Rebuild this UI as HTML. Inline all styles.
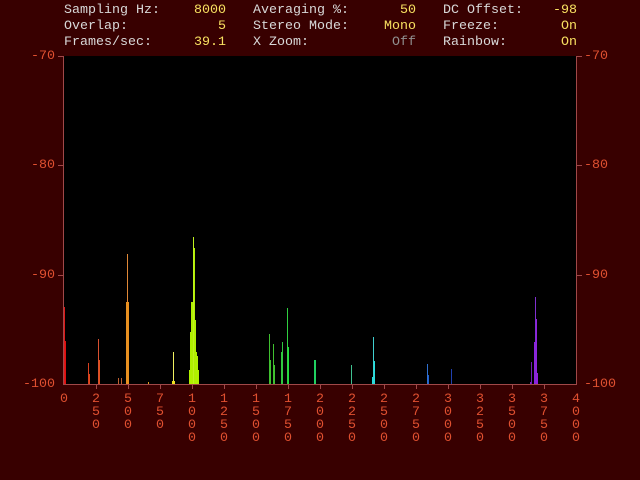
<!DOCTYPE html><html><head><style>
body{margin:0;width:640px;height:480px;background:#380000;overflow:hidden;position:relative;font-family:"Liberation Mono",monospace;font-size:13.33px}
.t{position:absolute;white-space:pre;line-height:16px}
.g{color:#d8d8d8}.y{color:#f8e060}.o{color:#909090}
.a{position:absolute;color:#e05030;line-height:13px;white-space:pre}
</style></head><body>
<div class="t g" style="left:64px;top:3px">Sampling Hz:<br>Overlap:<br>Frames/sec:</div>
<div class="t y" style="left:160px;top:3px;width:66px;text-align:right">8000<br>5<br>39.1</div>
<div class="t g" style="left:253px;top:3px">Averaging %:<br>Stereo Mode:<br>X Zoom:</div>
<div class="t y" style="left:350px;top:3px;width:66px;text-align:right">50<br>Mono<br><span class="o">Off</span></div>
<div class="t g" style="left:443px;top:3px">DC Offset:<br>Freeze:<br>Rainbow:</div>
<div class="t y" style="left:510px;top:3px;width:67px;text-align:right">-98<br>On<br>On</div>
<svg width="640" height="480" style="position:absolute;left:0;top:0">
<rect x="64" y="56" width="512" height="328" fill="#000"/>
<g stroke="#a04848" stroke-width="1" fill="none">
<path d="M63.5 56V384.5H576.5V56"/>
<path d="M58 56.5H64M58 165.5H64M58 275.5H64M576 56.5H582M576 165.5H582M576 275.5H582"/>
<path d="M96.5 385V389M128.5 385V389M160.5 385V389M192.5 385V389M224.5 385V389M256.5 385V389M288.5 385V389M320.5 385V389M352.5 385V389M384.5 385V389M416.5 385V389M448.5 385V389M480.5 385V389M512.5 385V389M544.5 385V389"/>
</g>
<g>
<rect x="64" y="307" width="1" height="77" fill="#e01818"/><rect x="65" y="341" width="1" height="43" fill="#e01010"/>
<rect x="88" y="363" width="1" height="21" fill="#d84020"/><rect x="89" y="374" width="1" height="10" fill="#e04818"/>
<rect x="98" y="339" width="1" height="45" fill="#d85030"/><rect x="99" y="360" width="1" height="24" fill="#e05018"/>
<rect x="118" y="378" width="1" height="6" fill="#c06030"/><rect x="121" y="378" width="1" height="6" fill="#c06030"/>
<rect x="126" y="302" width="3" height="82" fill="#e89020"/><rect x="127" y="254" width="1" height="48" fill="#e08838"/>
<rect x="148" y="382" width="1" height="2" fill="#e0a020"/>
<rect x="173" y="352" width="1" height="32" fill="#f0f060"/><rect x="172" y="381" width="3" height="3" fill="#f0e020"/>
<rect x="189" y="370" width="10" height="14" fill="#b0f000"/>
<rect x="190" y="332" width="2" height="52" fill="#b0f000"/><rect x="191" y="302" width="1" height="82" fill="#b0f000"/>
<rect x="192" y="302" width="1" height="82" fill="#b0f000"/><rect x="193" y="237" width="1" height="147" fill="#c0f020"/>
<rect x="194" y="248" width="1" height="136" fill="#b0f000"/><rect x="195" y="320" width="1" height="64" fill="#b0f000"/>
<rect x="196" y="352" width="1" height="32" fill="#b0f000"/><rect x="197" y="356" width="1" height="28" fill="#b0f000"/>
<rect x="269" y="334" width="1" height="50" fill="#40c030"/><rect x="270" y="360" width="1" height="24" fill="#40c030"/>
<rect x="273" y="344" width="1" height="40" fill="#40c030"/><rect x="274" y="365" width="1" height="19" fill="#40c030"/>
<rect x="281" y="352" width="1" height="32" fill="#30c840"/><rect x="282" y="342" width="1" height="42" fill="#30c840"/>
<rect x="287" y="308" width="1" height="76" fill="#30d040"/><rect x="288" y="347" width="1" height="37" fill="#20e040"/>
<rect x="314" y="360" width="2" height="24" fill="#20d060"/>
<rect x="351" y="365" width="1" height="19" fill="#40c090"/>
<rect x="373" y="337" width="1" height="47" fill="#40d0d0"/><rect x="374" y="361" width="1" height="23" fill="#20e0e0"/><rect x="372" y="377" width="1" height="7" fill="#20e0e0"/>
<rect x="427" y="364" width="1" height="20" fill="#3070d0"/><rect x="428" y="375" width="1" height="9" fill="#2060d0"/>
<rect x="451" y="369" width="1" height="15" fill="#2040b0"/>
<rect x="531" y="362" width="1" height="22" fill="#7020b0"/><rect x="530" y="382" width="1" height="2" fill="#8020d0"/>
<rect x="534" y="342" width="1" height="42" fill="#9020e0"/><rect x="535" y="297" width="1" height="87" fill="#8030d0"/>
<rect x="536" y="319" width="1" height="65" fill="#9020e0"/><rect x="537" y="373" width="1" height="11" fill="#9020e0"/>
</g>
</svg>
<div class="a" style="left:22px;top:50px;width:33px;text-align:right">-70</div>
<div class="a" style="left:22px;top:159px;width:33px;text-align:right">-80</div>
<div class="a" style="left:22px;top:269px;width:33px;text-align:right">-90</div>
<div class="a" style="left:22px;top:378px;width:33px;text-align:right">-100</div>
<div class="a" style="left:584px;top:50px">-70</div>
<div class="a" style="left:584px;top:159px">-80</div>
<div class="a" style="left:584px;top:269px">-90</div>
<div class="a" style="left:584px;top:378px">-100</div>
<div class="a" style="left:60px;top:393px">0</div>
<div class="a" style="left:92px;top:393px">2<br>5<br>0</div>
<div class="a" style="left:124px;top:393px">5<br>0<br>0</div>
<div class="a" style="left:156px;top:393px">7<br>5<br>0</div>
<div class="a" style="left:188px;top:393px">1<br>0<br>0<br>0</div>
<div class="a" style="left:220px;top:393px">1<br>2<br>5<br>0</div>
<div class="a" style="left:252px;top:393px">1<br>5<br>0<br>0</div>
<div class="a" style="left:284px;top:393px">1<br>7<br>5<br>0</div>
<div class="a" style="left:316px;top:393px">2<br>0<br>0<br>0</div>
<div class="a" style="left:348px;top:393px">2<br>2<br>5<br>0</div>
<div class="a" style="left:380px;top:393px">2<br>5<br>0<br>0</div>
<div class="a" style="left:412px;top:393px">2<br>7<br>5<br>0</div>
<div class="a" style="left:444px;top:393px">3<br>0<br>0<br>0</div>
<div class="a" style="left:476px;top:393px">3<br>2<br>5<br>0</div>
<div class="a" style="left:508px;top:393px">3<br>5<br>0<br>0</div>
<div class="a" style="left:540px;top:393px">3<br>7<br>5<br>0</div>
<div class="a" style="left:572px;top:393px">4<br>0<br>0<br>0</div>
</body></html>
